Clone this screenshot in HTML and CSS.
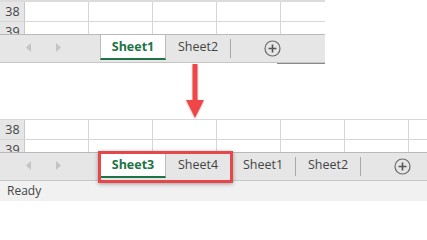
FILE: index.html
```html
<!DOCTYPE html>
<html>
<head>
<meta charset="utf-8">
<link rel="stylesheet" href="styles.css">
</head>
<body>
<div class="top">
  <div class="sheet top-sheet">
    <div class="row r1"><div class="hdr">38</div><div class="cell"></div><div class="cell"></div><div class="cell"></div><div class="cell"></div><div class="cell"></div></div>
    <div class="row r2"><div class="hdr">39</div><div class="cell"></div><div class="cell"></div><div class="cell"></div><div class="cell"></div><div class="cell"></div></div>
  </div>
  <div class="tabbar">
    <div class="nav">
      <svg width="6" height="9" viewBox="0 0 6 9"><polygon points="5,0 5,9 0,4.5" fill="#c4c4c4"/></svg>
      <svg width="6" height="9" viewBox="0 0 6 9"><polygon points="1,0 1,9 6,4.5" fill="#c4c4c4"/></svg>
    </div>
    <div class="tab active">Sheet1</div>
    <div class="tab">Sheet2</div><div class="sep"></div>
    <div class="add"><svg width="17" height="17" viewBox="0 0 17 17"><circle cx="8.5" cy="8.5" r="7.5" fill="none" stroke="#6a6a6a" stroke-width="1.2"/><path d="M8.5 4.5v8M4.5 8.5h8" stroke="#555" stroke-width="1.6"/></svg></div>
  </div>
  <div class="hline"><div class="hdark"></div></div>
</div>
<div class="gap">
  <svg class="arrow" width="18" height="55" viewBox="0 0 18 55"><rect x="6.5" y="0" width="5" height="38" fill="#ef4747"/><polygon points="0,36 18,36 9,54" fill="#ef4747"/></svg>
</div>
<div class="bottom">
  <div class="sheet bottom-sheet">
    <div class="row r1"><div class="hdr">38</div><div class="cell"></div><div class="cell"></div><div class="cell"></div><div class="cell"></div><div class="cell"></div><div class="cell"></div><div class="cell"></div></div>
    <div class="row r2"><div class="hdr">39</div><div class="cell"></div><div class="cell"></div><div class="cell"></div><div class="cell"></div><div class="cell"></div><div class="cell"></div><div class="cell"></div></div>
  </div>
  <div class="tabbar full">
    <div class="nav">
      <svg width="6" height="9" viewBox="0 0 6 9"><polygon points="5,0 5,9 0,4.5" fill="#c4c4c4"/></svg>
      <svg width="6" height="9" viewBox="0 0 6 9"><polygon points="1,0 1,9 6,4.5" fill="#c4c4c4"/></svg>
    </div>
    <div class="tab active">Sheet3</div>
    <div class="tab">Sheet4</div><div class="sep"></div>
    <div class="tab">Sheet1</div><div class="sep"></div>
    <div class="tab">Sheet2</div><div class="sep"></div>
    <div class="add"><svg width="17" height="17" viewBox="0 0 17 17"><circle cx="8.5" cy="8.5" r="7.5" fill="none" stroke="#6a6a6a" stroke-width="1.2"/><path d="M8.5 4.5v8M4.5 8.5h8" stroke="#555" stroke-width="1.6"/></svg></div>
    <div class="highlight"></div>
  </div>
  <div class="status">Ready</div>
</div>
</body>
</html>
```
FILE: styles.css
```css
* { box-sizing: border-box; }
html, body { margin: 0; padding: 0; background: #fff; }
body { width: 427px; height: 201px; overflow: hidden; font-family: "Open Sans", "Noto Sans", sans-serif; color: #444; }

.top { width: 325px; }

.sheet { overflow: hidden; }
.top-sheet { height: 34px; border-top: 2px solid #dcdcdc; }
.bottom-sheet { height: 33px; border-top: 1px solid #d8d8d8; }

.row { display: flex; }
.r1 { height: 20px; border-bottom: 1px solid #d6d6d6; }
.r2 { height: 20px; }

.hdr {
  width: 25px; flex: none; background: #e6e6e6; border-right: 1px solid #c8c8c8;
  font-size: 12.5px; line-height: 19px; text-align: center; color: #444; padding-left: 1px;
}
.cell { width: 64px; flex: none; border-right: 1px solid #d6d6d6; }

.tabbar {
  position: relative; display: flex; align-items: flex-start;
  height: 29px; background: #e6e6e6;
  border-top: 1px solid #b9b9b9; border-bottom: 1px solid #c6c6c6;
}
.nav { width: 100px; flex: none; display: flex; gap: 23px; padding: 8px 0 0 26px; }
.nav svg { display: block; }

.tab {
  width: 64px; flex: none; height: 25px; font-size: 12.5px; line-height: 24px; text-align: center; color: #444;
}
.tab.active {
  width: 66px; background: #fff; color: #217346; font-weight: bold;
  border-left: 1px solid #bcbcbc; border-right: 1px solid #bcbcbc; border-bottom: 2px solid #217346;
  line-height: 23px;
}
.sep { width: 1px; flex: none; height: 19px; margin-top: 4px; background: #a8a8a8; }
.add { margin-left: 33px; padding-top: 5px; }
.add svg { display: block; }

.hline { height: 1px; display: flex; justify-content: flex-end; }
.hdark { width: 48px; background: #8a8a8a; }

.gap { height: 55px; padding-left: 186px; }
.arrow { display: block; filter: drop-shadow(0 1px 1px rgba(120,0,0,.25)); }

.highlight {
  position: absolute; left: 98px; top: -2px; width: 135px; height: 32px;
  border: 3px solid #e6474b; box-shadow: 0 1px 4px rgba(0,0,0,.35);
}

.status { height: 20px; background: #f1f1f1; font-size: 12px; line-height: 20px; padding-left: 7px; color: #444; }
```
